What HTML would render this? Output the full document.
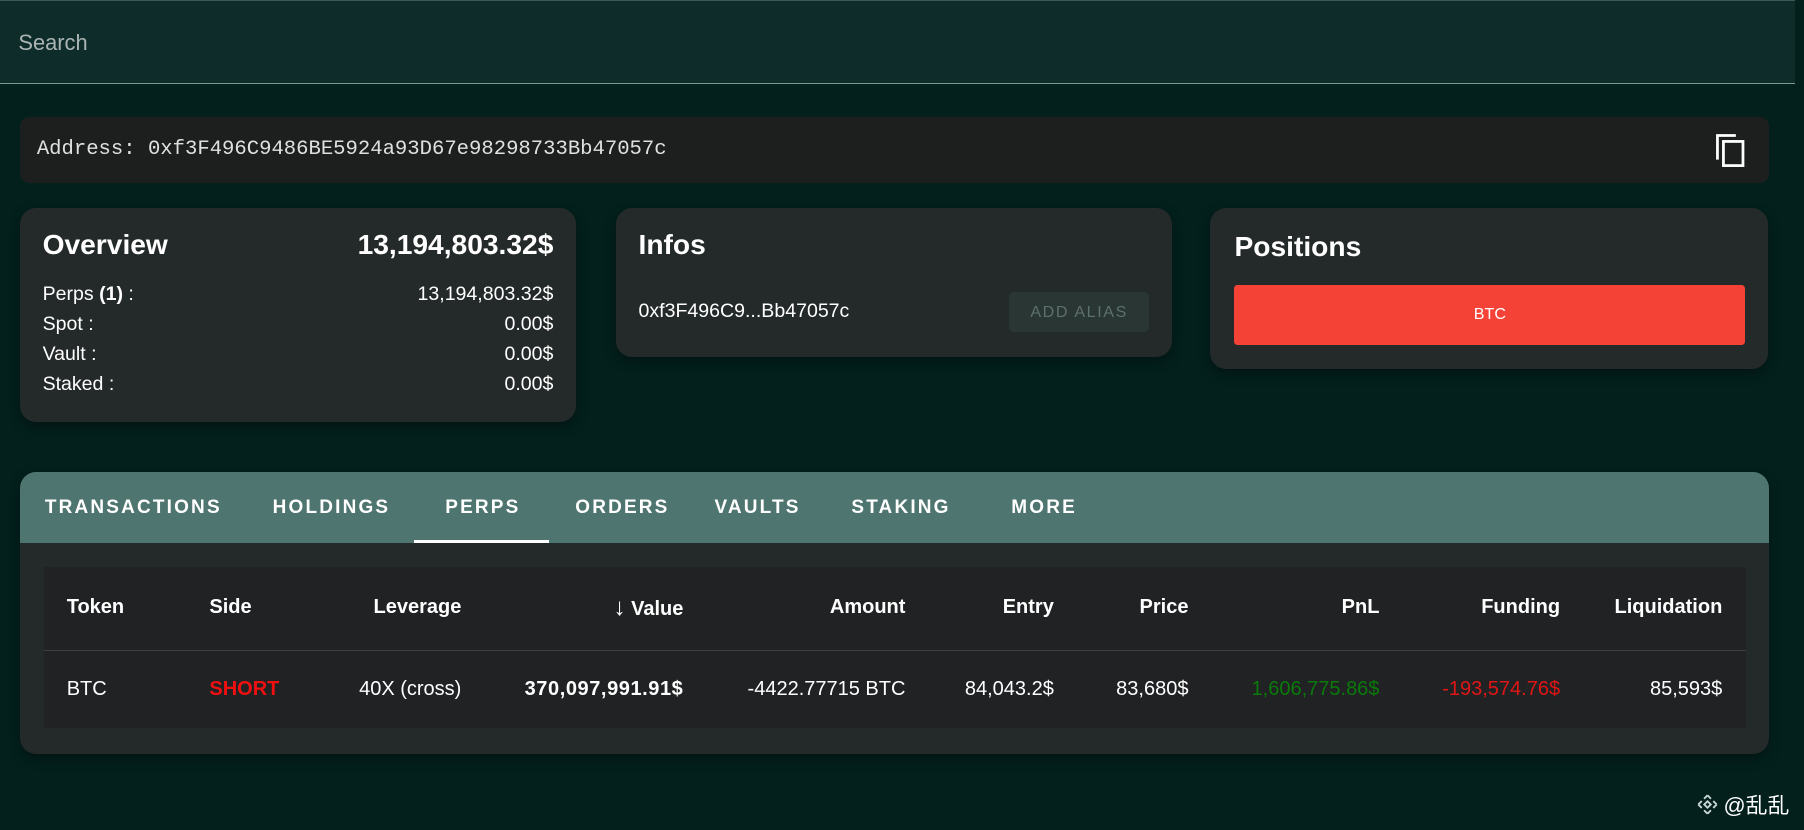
<!DOCTYPE html>
<html><head><meta charset="utf-8"><style>
html,body{margin:0;padding:0;width:1804px;height:830px;overflow:hidden;background:#03201d;}
#w{zoom:1.1505;position:relative;width:1568px;height:722px;font-family:"Liberation Sans","Noto Sans CJK SC",sans-serif;color:#fff;}
.a{position:absolute;}
.card{position:absolute;background:#242a29;border-radius:14px;box-shadow:0 4px 10px rgba(0,0,0,.35);}
.t{font-size:24.5px;font-weight:bold;}
.r{position:absolute;font-size:17px;line-height:20px;}
.tab{position:absolute;top:431px;font-size:16.5px;font-weight:bold;letter-spacing:1.9px;line-height:20px;}
.h{position:absolute;top:518px;font-size:17.4px;font-weight:bold;line-height:20px;}
.d{position:absolute;top:589px;font-size:17.4px;line-height:20px;}
</style></head><body><div id="w">
<div class="a" style="left:0;top:0;width:1560px;height:73px;background:#0e2c29;border-top:1px solid #3a5a55;border-bottom:1px solid #7a9a95;box-sizing:border-box;"></div>
<div class="a" style="left:16px;top:26px;font-size:19px;color:#aab5b3;">Search</div>

<div class="a" style="left:17px;top:102px;width:1521px;height:57px;background:#1c1f1e;border-radius:8px;"></div>
<div class="a" style="left:32px;top:120px;font-family:'Liberation Mono',monospace;font-size:17.9px;color:#e0e0e0;">Address: 0xf3F496C9486BE5924a93D67e98298733Bb47057c</div>
<svg class="a" style="left:1490px;top:115px" width="30" height="32" viewBox="0 0 30 32"><path d="M3 24V3h16" fill="none" stroke="#fff" stroke-width="2.4"/><rect x="8.2" y="8.2" width="17" height="21" fill="none" stroke="#fff" stroke-width="2.4"/></svg>

<div class="card" style="left:17px;top:181px;width:484px;height:186px;"></div>
<div class="a t" style="left:37px;top:198px;">Overview</div>
<div class="a t" style="right:1087px;top:198px;font-weight:600;">13,194,803.32$</div>
<div class="r" style="left:37px;top:246px;">Perps <b>(1)</b> :</div><div class="r" style="right:1087px;top:246px;">13,194,803.32$</div>
<div class="r" style="left:37px;top:272px;">Spot :</div><div class="r" style="right:1087px;top:272px;">0.00$</div>
<div class="r" style="left:37px;top:298px;">Vault :</div><div class="r" style="right:1087px;top:298px;">0.00$</div>
<div class="r" style="left:37px;top:324px;">Staked :</div><div class="r" style="right:1087px;top:324px;">0.00$</div>

<div class="card" style="left:535px;top:181px;width:484px;height:129px;"></div>
<div class="a t" style="left:555px;top:198px;">Infos</div>
<div class="r" style="left:555px;top:261px;">0xf3F496C9...Bb47057c</div>
<div class="a" style="left:877px;top:254px;width:122px;height:35px;background:#2a3634;border-radius:4px;color:#5c706c;font-size:14px;letter-spacing:1.4px;text-align:center;line-height:35px;">ADD ALIAS</div>

<div class="card" style="left:1052px;top:181px;width:485px;height:140px;"></div>
<div class="a t" style="left:1073px;top:200px;font-weight:600;">Positions</div>
<div class="a" style="left:1073px;top:248px;width:444px;height:52px;background:#f44336;border-radius:3px;font-size:14px;text-align:center;line-height:52px;">BTC</div>

<div class="card" style="left:17px;top:410px;width:1521px;height:245px;overflow:hidden;">
<div style="height:62px;background:#4e7570;"></div></div>
<div class="tab" style="left:39px;">TRANSACTIONS</div>
<div class="tab" style="left:237px;">HOLDINGS</div>
<div class="tab" style="left:387px;">PERPS</div>
<div class="a" style="left:360px;top:469px;width:117px;height:3px;background:#fff;"></div>
<div class="tab" style="left:500px;">ORDERS</div>
<div class="tab" style="left:621px;">VAULTS</div>
<div class="tab" style="left:740px;">STAKING</div>
<div class="tab" style="left:879px;">MORE</div>

<div class="a" style="left:38px;top:493px;width:1480px;height:140px;background:#202223;"></div>
<div class="a" style="left:38px;top:565px;width:1480px;height:1px;background:#3c4140;"></div>
<div class="h" style="left:58px;">Token</div>
<div class="h" style="left:182px;">Side</div>
<div class="h" style="right:1167px;">Leverage</div>
<div class="h" style="right:974px;"><span style="font-size:21px;font-weight:normal;">&#8595;</span> Value</div>
<div class="h" style="right:781px;">Amount</div>
<div class="h" style="right:652px;">Entry</div>
<div class="h" style="right:535px;">Price</div>
<div class="h" style="right:369px;">PnL</div>
<div class="h" style="right:212px;">Funding</div>
<div class="h" style="right:71px;">Liquidation</div>
<div class="d" style="left:58px;">BTC</div>
<div class="d" style="left:182px;color:#f01010;font-weight:bold;">SHORT</div>
<div class="d" style="right:1167px;">40X (cross)</div>
<div class="d" style="right:974px;font-weight:bold;letter-spacing:0.5px;">370,097,991.91$</div>
<div class="d" style="right:781px;">-4422.77715 BTC</div>
<div class="d" style="right:652px;">84,043.2$</div>
<div class="d" style="right:535px;">83,680$</div>
<div class="d" style="right:369px;color:#0a7a0a;">1,606,775.86$</div>
<div class="d" style="right:212px;color:#e01515;">-193,574.76$</div>
<div class="d" style="right:71px;">85,593$</div>

<svg class="a" style="left:1474px;top:689px" width="20" height="20" viewBox="0 0 20 20"><g fill="none" stroke="#c8d8d8" stroke-width="1.6"><path d="M10 2l3 3M10 2L7 5M2 10l3-3M2 10l3 3M18 10l-3-3M18 10l-3 3M10 18l3-3M10 18l-3-3"/><rect x="8" y="8" width="4" height="4" transform="rotate(45 10 10)"/></g></svg>
<div class="a" style="left:1498px;top:686px;font-size:19px;color:#fff;">@乱乱</div>
</div></body></html>
